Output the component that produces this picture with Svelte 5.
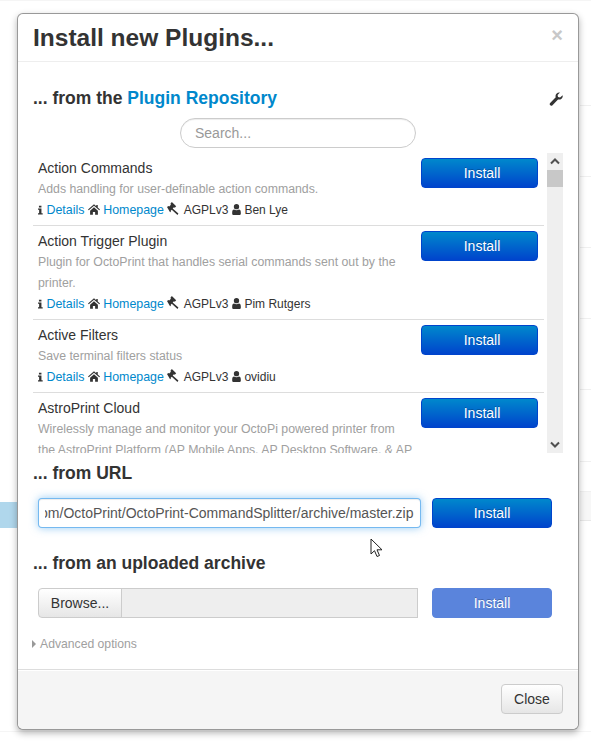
<script>
  import { onMount } from 'svelte';

  const plugins = [
    { name: 'Action Commands', desc: 'Adds handling for user-definable action commands.', license: 'AGPLv3', author: 'Ben Lye' },
    { name: 'Action Trigger Plugin', desc: 'Plugin for OctoPrint that handles serial commands sent out by the printer.', license: 'AGPLv3', author: 'Pim Rutgers' },
    { name: 'Active Filters', desc: 'Save terminal filters status', license: 'AGPLv3', author: 'ovidiu' },
    { name: 'AstroPrint Cloud', desc: 'Wirelessly manage and monitor your OctoPi powered printer from the AstroPrint Platform (AP Mobile Apps, AP Desktop Software, & AP Web Portal).', license: 'AGPLv3', author: 'AstroPrint' }
  ];

  // rows of the page behind the dialog
  const rows = [
    { h: 105 }, { h: 71 }, { h: 71 }, { h: 71 }, { h: 71 }, { h: 72 }, { h: 30 }, { h: 29, shaded: true }, { h: 211, full: true }
  ];

  let urlInput;

  onMount(() => {
    // the long url shows its tail, as after typing it
    urlInput.scrollLeft = urlInput.scrollWidth;
  });
</script>

<main class="page">
  <div class="backdrop">
    {#each rows as row}
      <div class="bg-row" class:shaded={row.shaded} class:full={row.full} style="height: {row.h}px"></div>
    {/each}
    <div class="bg-selected"></div>
  </div>

  <div class="modal">
    <div class="modal-header">
      <h3>Install new Plugins...</h3>
      <span class="close-x">×</span>
    </div>

    <div class="modal-body">
      <div class="repo-head">
        <h4>... from the <a href="#repo">Plugin Repository</a></h4>
        <svg class="wrench" viewBox="0 0 16 16" width="14" height="14">
          <path fill="#333" d="M15.6 3.6c.3 1.500-.2 3-1.300 4-1.100 1-2.600 1.300-4 .9l-6.300 6.600c-.7.800-1.900.8-2.600.1-.8-.7-.8-1.900-.1-2.600L7.700 6c-.5-1.400-.2-3 .8-4.100C9.600.8 11 .3 12.500.5L9.800 3.300l.5 2.300 2.300.6z" />
        </svg>
      </div>

      <div class="search-row">
        <input class="search" type="text" placeholder="Search..." />
      </div>

      <div class="repo-list">
        <div class="entries">
          {#each plugins as plugin}
            <div class="entry">
              <div class="entry-info">
                <div class="entry-name">{plugin.name}</div>
                <div class="entry-desc">{plugin.desc}</div>
                <div class="entry-links">
                  <svg class="ico" viewBox="0 0 8 14" width="5" height="10"><path fill="#333" d="M1.500 0h4v3h-4zM0 4.500h5.500V12H7.500v2H0v-2h1.800V6.500H0z" /></svg>
                  <a href="#details">Details</a>
                  <svg class="ico" viewBox="0 0 16 14" width="12" height="11"><path fill="#333" d="M8 0l3 2.600V1h2v3.300L16 7l-1 1.100L8 2 1 8.100 0 7zM2.800 8.600 8 4l5.200 4.600V14H9.500v-3.800h-3V14H2.800z" /></svg>
                  <a href="#home">Homepage</a>
                  <svg class="ico" viewBox="0 0 14 14" width="13" height="13"><path fill="#333" d="M5.200 0l4.700 4.700-1.500 1.500-.9-.5-1.400 1.400 6.200 5.400-1 1.500-6.200-5.700-1.300 1.300.5.900L3.300 11 0 5.300l1.500-1 .9.500L4.200 2.900l-.5-.9z" /></svg>
                  <span class="meta">{plugin.license}</span>
                  <svg class="ico" viewBox="0 0 11 14" width="9" height="11"><path fill="#333" d="M5.500 0a3.300 3.300 0 0 1 0 6.800 3.300 3.300 0 0 1 0-6.800zM2.400 7c.9.600 1.900.9 3.100.9S7.700 7.600 8.600 7C10.200 7 11 8.500 11 11v1c0 1.200-.8 2-2 2H2c-1.200 0-2-.8-2-2v-1c0-2.500.8-4 2.400-4z" /></svg>
                  <span class="meta">{plugin.author}</span>
                </div>
              </div>
              <button class="btn-primary entry-btn">Install</button>
            </div>
          {/each}
        </div>
        <div class="scrollbar">
          <svg viewBox="0 0 16 17" width="16" height="17"><path fill="none" stroke="#505050" stroke-width="2" d="M4 10.500l4-4 4 4" /></svg>
          <div class="thumb"></div>
          <div class="track"></div>
          <svg viewBox="0 0 16 17" width="16" height="17"><path fill="none" stroke="#505050" stroke-width="2" d="M4 6.500l4 4 4-4" /></svg>
        </div>
      </div>

      <h4 class="url-head">... from URL</h4>
      <div class="form-row">
        <input
          class="url-input"
          type="text"
          bind:this={urlInput}
          value="https://github.com/OctoPrint/OctoPrint-CommandSplitter/archive/master.zip"
        />
        <button class="btn-primary">Install</button>
      </div>

      <h4 class="upload-head">... from an uploaded archive</h4>
      <div class="form-row">
        <div class="file-field">
          <button class="browse">Browse...</button>
          <div class="file-name"></div>
        </div>
        <button class="btn-primary disabled">Install</button>
      </div>

      <div class="advanced">
        <span class="caret"></span>Advanced options
      </div>
    </div>

    <div class="modal-footer">
      <button class="btn-close">Close</button>
    </div>
  </div>

  <svg class="cursor" viewBox="0 0 13 20" width="13" height="20">
    <path fill="#fff" stroke="#222" stroke-width="1" d="M1 1v15l3.500-3.300 2.500 5.800 2.500-1-2.500-5.700h5z" />
  </svg>
</main>

<style>
  :global(body) {
    margin: 0;
    background: #fff;
  }

  .page {
    position: relative;
    width: 591px;
    height: 743px;
    overflow: hidden;
    font-family: "Liberation Sans", Arial, sans-serif;
    font-size: 14px;
    line-height: 20px;
    color: #333;
  }

  .backdrop {
    position: absolute;
    inset: 0;
    display: flex;
    flex-direction: column;
    border-top: 1px solid #f5f5f5;
  }

  .bg-row {
    flex: none;
    box-sizing: border-box;
    margin-left: 580px;
    border-bottom: 1px solid #f0f0f0;
  }

  .bg-row.shaded {
    background: #f7f7f7;
    border-bottom-color: #e8e8e8;
  }

  .bg-row.full {
    margin-left: 0;
    border-bottom-color: #f5f5f5;
  }

  .bg-selected {
    position: absolute;
    left: 0;
    top: 501px;
    width: 18px;
    height: 26px;
    background: #b0d7ec;
  }

  .modal {
    position: absolute;
    left: 17px;
    top: 13px;
    width: 560px;
    height: 715px;
    display: flex;
    flex-direction: column;
    background: #fff;
    border: 1px solid rgba(0, 0, 0, 0.4);
    border-radius: 6px;
    box-shadow: 0 3px 7px rgba(0, 0, 0, 0.3);
  }

  .modal-header {
    flex: none;
    height: 48px;
    box-sizing: border-box;
    padding: 9px 15px;
    display: flex;
    justify-content: space-between;
    border-bottom: 1px solid #eee;
  }

  h3 {
    margin: 0;
    font-size: 24.5px;
    line-height: 29px;
    font-weight: bold;
  }

  .close-x {
    font-size: 20px;
    font-weight: bold;
    line-height: 24px;
    color: #c8c8c8;
  }

  .modal-body {
    flex: 1;
    padding: 26px 15px 0;
  }

  h4 {
    margin: 0;
    font-size: 17.5px;
    line-height: 20px;
    font-weight: bold;
  }

  h4 a,
  .entry-links a {
    color: #0088cc;
    text-decoration: none;
  }

  .repo-head {
    display: flex;
    justify-content: space-between;
    align-items: center;
  }

  .wrench {
    margin-top: 2px;
  }

  .search-row {
    display: flex;
    justify-content: center;
    margin-top: 10px;
  }

  .search {
    width: 236px;
    height: 30px;
    box-sizing: border-box;
    padding: 4px 14px;
    border: 1px solid #ccc;
    border-radius: 15px;
    outline: none;
    font: inherit;
    box-shadow: inset 0 1px 1px rgba(0, 0, 0, 0.075);
  }

  .search::placeholder {
    color: #999;
  }

  .repo-list {
    display: flex;
    gap: 3px;
    height: 300px;
    margin-top: 5px;
  }

  .entries {
    width: 511px;
    overflow: hidden;
  }

  .entry {
    display: flex;
    justify-content: space-between;
    align-items: flex-start;
    padding: 5px 6px 4px 5px;
    border-bottom: 1px solid #ddd;
  }

  .entry-info {
    width: 375px;
  }

  .entry-desc {
    margin-top: 1px;
    font-size: 12.3px;
    line-height: 21px;
    color: #a0a0a0;
  }

  .entry-links {
    font-size: 12.4px;
    line-height: 21px;
    color: #333;
  }

  .meta {
    font-size: 12px;
  }

  .ico {
    vertical-align: -1px;
  }

  .btn-primary {
    flex: none;
    width: 120px;
    height: 30px;
    box-sizing: border-box;
    padding: 0;
    border: 1px solid #0044cc;
    border-radius: 4px;
    background: linear-gradient(#0088cc, #0044cc);
    color: #fff;
    font: inherit;
    text-shadow: 0 -1px 0 rgba(0, 0, 0, 0.25);
  }

  .entry-btn {
    width: 117px;
    padding-left: 5px;
  }

  .btn-primary.disabled {
    background: #5a84dc;
    border-color: #5a84dc;
  }

  .scrollbar {
    flex: none;
    width: 16px;
    display: flex;
    flex-direction: column;
    background: #efefef;
  }

  .thumb {
    height: 17px;
    background: #c8c8c8;
  }

  .track {
    flex: 1;
  }

  .url-head {
    margin-top: 10px;
  }

  .form-row {
    display: flex;
    justify-content: space-between;
    margin-top: 15px;
    padding: 0 11px 0 5px;
  }

  .url-input {
    width: 383px;
    height: 30px;
    box-sizing: border-box;
    padding: 4px 6px;
    border: 1px solid rgba(82, 168, 236, 0.8);
    border-radius: 4px;
    outline: none;
    color: #555;
    font: inherit;
    box-shadow: inset 0 1px 1px rgba(0, 0, 0, 0.075), 0 0 8px rgba(82, 168, 236, 0.6);
  }

  .upload-head {
    margin-top: 25px;
  }

  .file-field {
    display: flex;
    width: 380px;
    height: 30px;
  }

  .browse {
    flex: none;
    width: 84px;
    padding: 0;
    border: 1px solid #ccc;
    border-radius: 4px 0 0 4px;
    background: linear-gradient(#fff, #e6e6e6);
    color: #333;
    font: inherit;
  }

  .file-name {
    flex: 1;
    margin-left: -1px;
    border: 1px solid #ccc;
    background: #eee;
  }

  .advanced {
    display: flex;
    align-items: center;
    margin-top: 16px;
    font-size: 12.2px;
    color: #a0a0a0;
  }

  .caret {
    width: 0;
    height: 0;
    margin: 0 4px 0 -1px;
    border-left: 4px solid #999;
    border-top: 4px solid transparent;
    border-bottom: 4px solid transparent;
  }

  .modal-footer {
    flex: none;
    height: 60px;
    box-sizing: border-box;
    padding: 14px 15px;
    display: flex;
    justify-content: flex-end;
    background: #f5f5f5;
    border-top: 1px solid #ddd;
    border-radius: 0 0 6px 6px;
    box-shadow: inset 0 1px 0 #fff;
  }

  .btn-close {
    width: 62px;
    height: 30px;
    padding: 0;
    border: 1px solid #ccc;
    border-radius: 4px;
    background: linear-gradient(#fff, #e6e6e6);
    color: #333;
    font: inherit;
  }

  .cursor {
    position: absolute;
    left: 370px;
    top: 538px;
  }
</style>
